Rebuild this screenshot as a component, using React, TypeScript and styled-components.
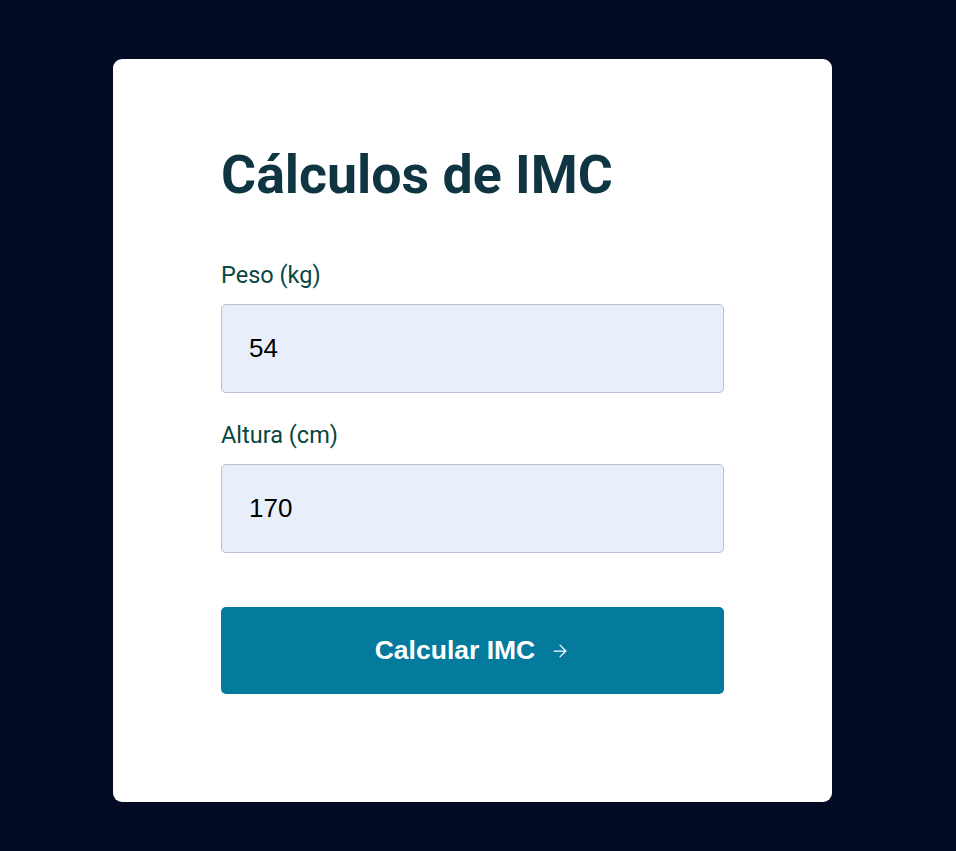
import styled, { createGlobalStyle } from "styled-components";
import { ArrowRight } from "lucide-react";

const GlobalStyle = createGlobalStyle`
  * {
    box-sizing: border-box;
  }

  body {
    margin: 0;
    background: #030a24;
  }
`;

interface FieldProps {
  label: string;
  value: string;
}

const Field = ({ label, value }: FieldProps) => {
  return (
    <FieldWrapper>
      <Label>{label}</Label>
      <Input type="text" defaultValue={value} />
    </FieldWrapper>
  );
};

const App = () => {
  return (
    <Page>
      <GlobalStyle />
      <Card>
        <Title>Cálculos de IMC</Title>
        <Form onSubmit={(e) => e.preventDefault()}>
          <Field label="Peso (kg)" value="54" />
          <Field label="Altura (cm)" value="170" />
          <SubmitButton type="submit">
            Calcular IMC
            <ArrowRight size={20} strokeWidth={1.5} />
          </SubmitButton>
        </Form>
      </Card>
    </Page>
  );
};

export default App;

const Page = styled.div`
  min-height: 851px;
  padding: 59px 0 0 113px;
  background: #030a24;
`;

const Card = styled.div`
  width: 719px;
  padding: 84px 108px 108px;

  display: flex;
  flex-direction: column;

  background: #ffffff;
  border-radius: 9px;
`;

const Title = styled.h1`
  margin: 0;
  font-family: Roboto, "Liberation Sans", sans-serif;
  font-size: 53.7px;
  line-height: 64px;
  font-weight: 700;
  color: #0f3442;
`;

const Form = styled.form`
  margin-top: 55px;
  display: flex;
  flex-direction: column;
  gap: 29px;
`;

const FieldWrapper = styled.div`
  display: flex;
  flex-direction: column;
  gap: 15px;
`;

const Label = styled.label`
  font-family: Roboto, "Liberation Sans", sans-serif;
  font-size: 23.5px;
  line-height: 27px;
  font-weight: 400;
  color: #08463f;
`;

const Input = styled.input`
  width: 100%;
  height: 89px;
  padding: 0 27px;

  font-family: "Liberation Sans", Arial, sans-serif;
  font-size: 26px;
  color: #000000;

  background: #e8effb;
  border: 1px solid #b8c0d2;
  border-radius: 5px;
  outline: none;
`;

const SubmitButton = styled.button`
  margin-top: 25px;
  width: 100%;
  height: 87px;

  display: flex;
  align-items: center;
  justify-content: center;
  gap: 15px;

  font-family: "Liberation Sans", Arial, sans-serif;
  font-size: 26.5px;
  font-weight: 700;
  color: #ffffff;

  background: #047a9c;
  border: none;
  border-radius: 5px;
  cursor: pointer;
`;
